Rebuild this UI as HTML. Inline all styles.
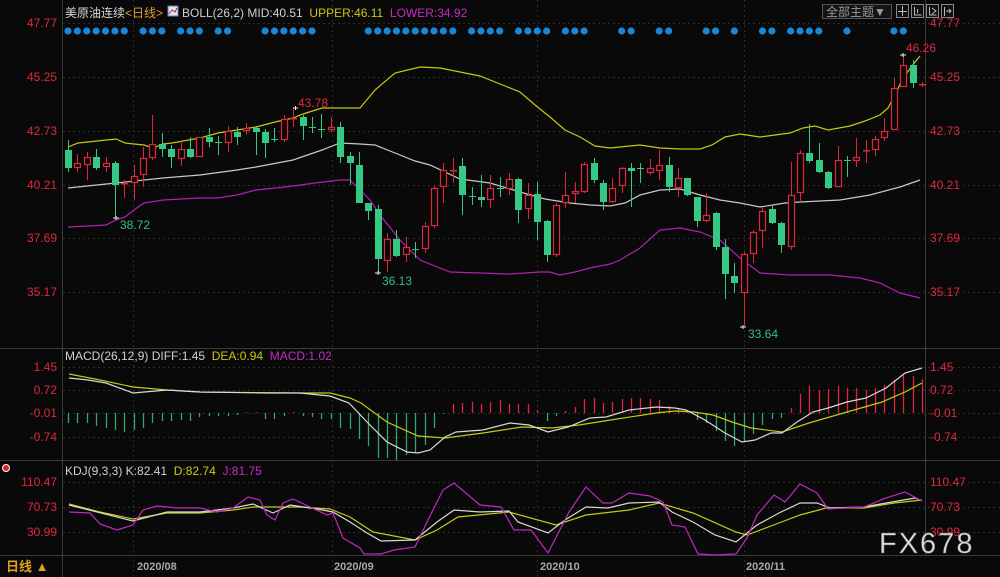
<!DOCTYPE html>
<html><head><meta charset="utf-8"><style>
html,body{margin:0;padding:0;background:#090909;}
svg{display:block;font-family:"Liberation Sans","Noto Sans CJK SC",sans-serif;}
</style></head><body>
<svg id="s" width="1000" height="577" viewBox="0 0 1000 577" xmlns="http://www.w3.org/2000/svg">
<rect width="1000" height="577" fill="#090909"/>
<g stroke="#3a3a3a" stroke-width="1">
<line x1="62.5" y1="0" x2="62.5" y2="577"/>
<line x1="925.5" y1="0" x2="925.5" y2="555"/>
<line x1="0" y1="348.5" x2="1000" y2="348.5"/>
<line x1="0" y1="460.5" x2="1000" y2="460.5"/>
<line x1="0" y1="555.5" x2="1000" y2="555.5"/>
</g>
<g stroke="#2c2c2c" stroke-width="1" stroke-dasharray="2,3">
<line x1="63" y1="23.5" x2="1000" y2="23.5"/><line x1="63" y1="77.5" x2="1000" y2="77.5"/>
<line x1="63" y1="131.5" x2="1000" y2="131.5"/><line x1="63" y1="185.5" x2="1000" y2="185.5"/>
<line x1="63" y1="238.5" x2="1000" y2="238.5"/><line x1="63" y1="292.5" x2="1000" y2="292.5"/>
<line x1="63" y1="367.5" x2="1000" y2="367.5"/><line x1="63" y1="390.5" x2="1000" y2="390.5"/>
<line x1="63" y1="413.5" x2="1000" y2="413.5"/><line x1="63" y1="437.5" x2="1000" y2="437.5"/>
<line x1="63" y1="482.5" x2="1000" y2="482.5"/><line x1="63" y1="507.5" x2="1000" y2="507.5"/>
<line x1="63" y1="532.5" x2="1000" y2="532.5"/>
<line x1="133.5" y1="0" x2="133.5" y2="577"/><line x1="332.5" y1="0" x2="332.5" y2="577"/>
<line x1="537.5" y1="0" x2="537.5" y2="577"/><line x1="744.5" y1="0" x2="744.5" y2="577"/>
</g>
<g fill="#e0283c" font-size="12">
<g text-anchor="end">
<text x="57" y="27">47.77</text><text x="57" y="81">45.25</text><text x="57" y="135">42.73</text>
<text x="57" y="189">40.21</text><text x="57" y="242">37.69</text><text x="57" y="296">35.17</text>
<text x="57" y="371">1.45</text><text x="57" y="394">0.72</text><text x="57" y="417">-0.01</text><text x="57" y="441">-0.74</text>
<text x="57" y="486">110.47</text><text x="57" y="511">70.73</text><text x="57" y="536">30.99</text>
</g>
<text x="930" y="27">47.77</text><text x="930" y="81">45.25</text><text x="930" y="135">42.73</text>
<text x="930" y="189">40.21</text><text x="930" y="242">37.69</text><text x="930" y="296">35.17</text>
<text x="930" y="371">1.45</text><text x="930" y="394">0.72</text><text x="930" y="417">-0.01</text><text x="930" y="441">-0.74</text>
<text x="930" y="486">110.47</text><text x="930" y="511">70.73</text><text x="930" y="536">30.99</text>
</g>
<g font-size="12">
<text x="65" y="17" fill="#d8d8d8">美原油连续<tspan fill="#e0a030">&lt;日线&gt;</tspan></text>
<rect x="168" y="6" width="10" height="10" fill="#dde4f0" stroke="#6080c0" stroke-width="1"/>
<polyline points="169,14 172,10 175,12 177,8" fill="none" stroke="#d02020" stroke-width="1"/>
<text x="182" y="17" fill="#d0d0d0" xml:space="preserve">BOLL(26,2) MID:40.51  <tspan fill="#c8c814">UPPER:46.11</tspan>  <tspan fill="#c42cc4">LOWER:34.92</tspan></text>
<text x="65" y="360" fill="#d0d0d0" xml:space="preserve">MACD(26,12,9) DIFF:1.45  <tspan fill="#c8c814">DEA:0.94</tspan>  <tspan fill="#c42cc4">MACD:1.02</tspan></text>
<text x="65" y="475" fill="#d0d0d0" xml:space="preserve">KDJ(9,3,3) K:82.41  <tspan fill="#c8c814">D:82.74</tspan>  <tspan fill="#c42cc4">J:81.75</tspan></text>
</g>
<rect x="822.5" y="4.5" width="69" height="14" fill="#141414" stroke="#555"/>
<text x="826" y="16" font-size="12" fill="#9a9a9a">全部主题▼</text>
<g fill="#111" stroke="#888">
<rect x="896.5" y="4.5" width="12" height="13"/><rect x="911.5" y="4.5" width="12" height="13"/>
<rect x="926.5" y="4.5" width="12" height="13"/><rect x="941.5" y="4.5" width="12" height="13"/>
</g>
<g stroke="#bbb" fill="none" stroke-width="1">
<path d="M902.5 6v10M898 11.5h9"/><path d="M914.5 7v8h7M917.5 9v4"/><path d="M929.5 7v8h7M932 8l4 3-4 3"/><path d="M944.5 7v9M946 11h5M949 9l2 2-2 2"/>
</g>
<circle cx="6" cy="468" r="3.5" fill="#e02020" stroke="#fff" stroke-width="1"/>
<g fill="none" stroke-width="1.2">
<polyline stroke="#c8c814" points="68,147 78,143 97,141 116,139 125,143 134,144 144,145 153,148 163,144 172,143 200,138 218,133 237,130 256,127 275,122 293,118 303,114 322,108 350,108 360,108 375,90 395,73 420,67 440,68 460,72 480,76 500,84 520,92 535,105 550,117 565,130 580,137 595,146 610,148 640,145 660,148 680,149 700,149 712,145 725,137 740,134 760,137 775,135 790,133 803,128 815,126 828,130 850,126 865,121 880,115 888,108 895,95 903,78 912,66 920,56"/>
<polyline stroke="#c8c8c8" points="68,188 116,183 163,178 200,175 237,170 256,167 293,160 322,150 340,143 360,144 375,145 395,153 415,161 430,165 460,179 490,183 520,192 545,199 570,203 590,205 610,206 625,203 640,195 660,190 680,189 700,195 720,200 740,203 760,207 785,203 800,202 840,200 870,195 900,187 920,180"/>
<polyline stroke="#b020b0" points="68,227 106,225 116,220 125,217 134,210 144,203 163,200 200,198 218,198 237,195 256,190 275,188 293,186 315,183 340,180 350,180 358,188 370,200 380,215 400,240 420,260 450,272 480,273 510,274 540,272 550,272 560,275 575,272 590,268 610,264 620,260 640,248 660,230 680,228 700,232 720,240 740,258 760,273 790,275 830,275 860,278 880,283 900,293 920,298"/>
</g>
<g id="candles"></g>
<g id="dots" fill="#1a86d6"></g>
<g id="hist"></g>
<g fill="none" stroke-width="1.2">
<polyline stroke="#c8c814" points="69,374 100,380 133,387 167,390 200,392 300,393 330,393 350,398 361,403 387,422 418,436 445,438 483,433 522,427 552,428 579,425 617,419 656,413 675,411 694,412 713,415 732,422 751,428 782,432 809,423 847,412 882,402 905,392 922,383"/>
<polyline stroke="#d8d8d8" points="69,378 88,380 106,383 133,393 167,390 200,392 267,393 300,393 330,396 349,403 368,423 387,442 407,452 418,453 430,450 445,437 456,432 483,430 510,423 529,425 548,432 568,427 590,418 606,417 629,410 656,407 675,408 686,410 705,420 725,433 742,442 755,440 771,433 782,433 797,422 813,412 828,408 847,402 866,398 886,388 905,373 922,368"/>
</g>
<g fill="none" stroke-width="1.2">
<polyline stroke="#c8c814" points="69,504 100,512 133,519 167,513 200,513 233,510 253,507 300,507 330,509 350,517 373,532 415,540 437,530 458,517 509,512 556,525 586,515 629,510 659,503 693,513 736,532 747,535 779,523 800,515 826,508 864,508 894,503 922,500"/>
<polyline stroke="#d8d8d8" points="69,505 133,521 167,512 200,512 233,508 253,504 273,513 290,505 317,509 333,512 350,522 367,533 381,541 415,540 437,522 454,510 480,512 509,511 518,522 548,533 565,520 586,507 608,508 629,503 659,502 672,512 693,522 715,535 736,542 747,533 757,525 779,513 800,503 817,503 830,508 864,507 886,503 915,498 922,501"/>
<polyline stroke="#c028c0" points="69,512 90,513 100,524 117,530 133,525 143,510 157,506 177,508 200,508 217,512 233,508 248,497 260,500 267,515 275,520 283,503 293,499 310,507 327,515 333,513 343,538 360,548 364,554 381,554 394,550 415,547 428,520 443,490 454,483 480,505 501,507 514,530 531,530 548,553 569,512 586,487 603,503 612,503 629,493 650,496 663,502 672,525 685,527 698,554 715,555 736,554 747,538 757,515 774,495 785,502 800,484 817,493 828,509 864,507 886,498 905,492 922,501"/>
</g>
<g font-size="12">
<text x="298" y="107" fill="#e0283c">43.78</text>
<text x="906" y="52" fill="#e0283c">46.26</text>
<text x="120" y="229" fill="#30c080">38.72</text>
<text x="382" y="285" fill="#30c080">36.13</text>
<text x="748" y="338" fill="#30c080">33.64</text>
</g>
<g stroke="#e8e8e8" stroke-width="1">
<path d="M293 108h5M295.5 106v4"/><path d="M900 55h6M903 53v4"/><path d="M113 218h6M116 216v4"/><path d="M375 273h6M378 271v4"/><path d="M740 327h6M743 325v4"/>
</g>
<text x="6" y="571" font-size="13" font-weight="bold" fill="#e0a020">日线 ▲</text>
<g font-size="11" font-weight="bold" fill="#a8a8a8">
<text x="137" y="570">2020/08</text><text x="334" y="570">2020/09</text>
<text x="540" y="570">2020/10</text><text x="746" y="570">2020/11</text>
</g>
<text x="879" y="553" font-size="29" fill="#dcdcdc" letter-spacing="2" stroke="#555" stroke-width="0.5">FX678</text>
</svg>
<script>
var ns="http://www.w3.org/2000/svg";
function el(p,t,a){var e=document.createElementNS(ns,t);for(var k in a)e.setAttribute(k,a[k]);p.appendChild(e);return e;}
var C=[
['g',150,168,140,172],['r',163,168,154,172],['r',157,165,152,180],['g',157,168,149,170],['r',163,167,157,172],
['g',163,185,161,218],['r',183,184,180,198],['r',176,183,165,200],['r',158,175,147,187],['r',144,158,115,160],
['g',144,149,133,157],['g',149,157,145,168],['r',149,159,140,166],['g',149,157,137,158],['r',137,157,137,157],
['g',137,142,128,147],['g',142,143,136,155],['r',131,143,126,152],['g',132,137,127,145],['r',128,131,123,135],
['g',128,132,127,155],['g',132,143,129,158],['g',139,140,128,142],['r',119,140,115,142],['r',118,119,108,127],
['g',117,126,115,140],['g',127,128,117,133],['g',129,130,114,138],['r',127,130,117,132],['g',127,157,122,163],
['g',156,163,152,185],['g',165,203,152,203],['g',203,211,203,220],['g',209,259,205,273],['r',239,261,233,272],
['g',239,256,230,257],['r',247,255,237,262],['g',249,250,242,258],['r',226,249,222,253],['r',188,226,186,228],
['r',170,187,163,203],['r',170,171,158,183],['g',166,195,158,215],['g',196,197,187,205],['g',197,200,175,207],
['r',188,200,175,208],['g',188,189,177,197],['r',179,189,173,195],['g',179,210,178,223],['r',195,209,183,219],
['g',194,222,182,240],['g',221,255,220,262],['r',205,255,203,257],['r',195,203,172,208],['r',191,194,182,203],
['r',164,192,162,193],['g',163,180,158,183],['g',183,202,180,210],['r',188,202,178,203],['r',168,186,167,193],
['g',168,171,163,207],['g',168,169,163,183],['r',168,173,159,175],['r',165,171,150,180],['g',165,187,157,192],
['r',178,188,168,197],['g',178,195,178,196],['g',197,221,197,227],['r',215,221,193,222],['g',213,247,212,250],
['g',247,274,239,299],['g',276,283,263,293],['r',254,293,252,327],['r',232,254,230,263],['r',211,231,207,248],
['g',209,223,205,224],['g',223,245,222,253],['r',195,247,162,250],['r',153,193,150,202],['g',153,161,124,163],
['g',160,172,143,173],['g',172,188,171,189],['r',160,187,146,187],['g',160,161,156,177],['r',157,161,138,167],
['r',150,151,140,163],['r',139,150,136,156],['r',131,138,118,141],['r',88,130,78,130],['r',65,87,55,87],
['g',65,83,60,88],['r',84,85,82,87]];
var gC=document.getElementById('candles');
C.forEach(function(c,i){
 var x=68+9.385*i, col=c[0]=='g'?'#35c985':'#e0263a';
 var xx=Math.round(x)+0.5;
 el(gC,'line',{x1:xx,y1:c[3],x2:xx,y2:c[4],stroke:col,'stroke-width':1});
 var h=Math.max(1,c[2]-c[1]);
 if(c[0]=='g') el(gC,'rect',{x:Math.round(x)-3,y:c[1],width:7,height:h,fill:col});
 else { if(h<=2) el(gC,'rect',{x:Math.round(x)-3,y:c[1],width:7,height:1.5,fill:col});
   else el(gC,'rect',{x:Math.round(x)-2.5,y:c[1]+0.5,width:6,height:h-1,fill:'#090909',stroke:col,'stroke-width':1.2}); }
});
var D=[0,1,2,3,4,5,6,8,9,10,12,13,14,16,17,21,22,23,24,25,26,32,33,34,35,36,37,38,39,40,41,43,44,45,46,48,49,50,51,53,54,55,59,60,63,64,68,69,71,74,75,77,78,79,80,83,88,89];
var gD=document.getElementById('dots');
D.forEach(function(i){el(gD,'circle',{cx:68+9.385*i,cy:31,r:3.6});});
var H=[-10,-10,-10,-13,-15,-17,-19,-17,-15,-10,-8,-8,-7,-8,-4,-3,-3,-3,-2,1,1,-6,-6,-3,1,-3,-4,-6,
-6,-15,-16,-26,-33,-45,-45,-47,-42,-40,-32,-15,-1,
9,10,11,9,11,13,9,9,9,3,-8,-3,2,6,14,15,10,11,14,15,15,14,13,7,5,3,-7,-10,-18,-28,-33,-29,-21,-12,-6,-5,5,19,27,23,24,27,25,25,23,25,28,33,38,37,34];
var gH=document.getElementById('hist');
H.forEach(function(v,i){var x=Math.round(68+9.385*i)+0.5;
 el(gH,'line',{x1:x,y1:413,x2:x,y2:413-v,stroke:v>0?'#e0263a':'#2fa86e','stroke-width':1.3});});
</script>
</body></html>
